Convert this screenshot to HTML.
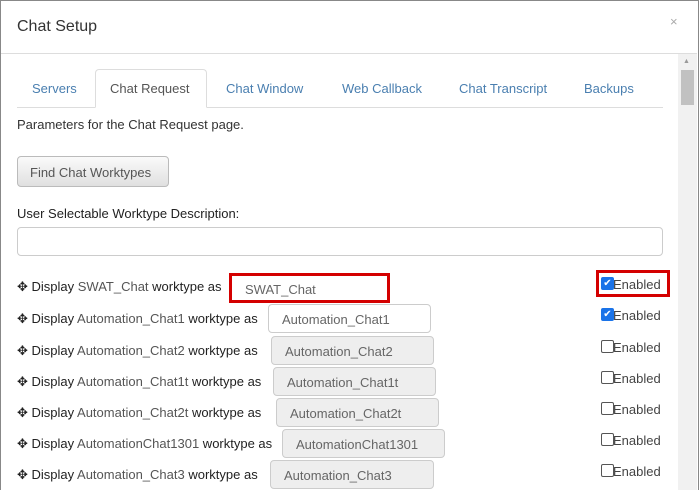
<!DOCTYPE html><html><head><style>
body{margin:0;width:699px;height:490px;overflow:hidden;background:#fff;font-family:"Liberation Sans",sans-serif;color:#333;position:relative}
.a{position:absolute;white-space:nowrap}
.tab{position:absolute;top:81px;font-size:13px;color:#4a7fb0}
.inp{position:absolute;height:29px;border:1px solid #ccc;border-radius:4px;box-sizing:border-box;font-size:13px;color:#666;padding:7px 0 0 13px}
.g{background:#eee}
.row{position:absolute;left:17px;font-size:13px;color:#222}
.row span{color:#555}
.cb{position:absolute;left:601px;width:11px;height:11px;border:1px solid #555;border-radius:2px;background:#fff}
.cb.on{background:#1a73e8;border-color:#1a73e8;color:#fff;font-size:10px;line-height:11px;text-align:center}
.en{position:absolute;left:613px;font-size:13px;color:#444}
</style></head><body>
<div class="a" style="left:0;top:0;width:697px;height:489px;border:1px solid #888;border-bottom:none"></div>
<div class="a" style="left:17px;top:18px;font-size:16px;color:#333">Chat Setup</div>
<div class="a" style="left:670px;top:14px;font-size:13px;color:#aaa">×</div>
<div class="a" style="left:1px;top:53px;width:696px;height:1px;background:#ddd"></div>
<div class="a" style="left:678px;top:54px;width:19px;height:436px;background:#f1f1f1"></div>
<div class="a" style="left:681px;top:70px;width:13px;height:35px;background:#c1c1c1"></div>
<div class="a" style="left:683px;top:58px;font-size:7px;color:#999">▲</div>
<div class="a" style="left:17px;top:107px;width:646px;height:1px;background:#ddd"></div>
<div class="a" style="left:95px;top:69px;width:112px;height:39px;border:1px solid #ddd;border-bottom:1px solid #fff;border-radius:4px 4px 0 0;box-sizing:border-box;background:#fff"></div>
<div class="tab" style="left:32px">Servers</div>
<div class="tab" style="left:110px;color:#555">Chat Request</div>
<div class="tab" style="left:226px">Chat Window</div>
<div class="tab" style="left:342px">Web Callback</div>
<div class="tab" style="left:459px">Chat Transcript</div>
<div class="tab" style="left:584px">Backups</div>
<div class="a" style="left:17px;top:117px;font-size:13px;color:#333">Parameters for the Chat Request page.</div>
<div class="a" style="left:17px;top:156px;width:152px;height:31px;border:1px solid #bbb;border-radius:4px;box-sizing:border-box;background:linear-gradient(#fafafa,#e0e0e0);font-size:13px;color:#555;padding:8px 0 0 12px">Find Chat Worktypes</div>
<div class="a" style="left:17px;top:206px;font-size:13px;color:#222">User Selectable Worktype Description:</div>
<div class="a" style="left:17px;top:227px;width:646px;height:29px;border:1px solid #ccc;border-radius:4px;box-sizing:border-box"></div>

<div class="row" style="top:279px">✥ Display <span>SWAT_Chat</span> worktype as</div>
<div class="inp" style="left:229px;top:273px;width:161px;height:30px;border:3px solid #d40000;border-radius:0;padding-top:6px">SWAT_Chat</div>
<div class="row" style="top:311px">✥ Display <span>Automation_Chat1</span> worktype as</div>
<div class="inp" style="left:268px;top:304px;width:163px">Automation_Chat1</div>
<div class="row" style="top:343px">✥ Display <span>Automation_Chat2</span> worktype as</div>
<div class="inp g" style="left:271px;top:336px;width:163px">Automation_Chat2</div>
<div class="row" style="top:374px">✥ Display <span>Automation_Chat1t</span> worktype as</div>
<div class="inp g" style="left:273px;top:367px;width:163px">Automation_Chat1t</div>
<div class="row" style="top:405px">✥ Display <span>Automation_Chat2t</span> worktype as</div>
<div class="inp g" style="left:276px;top:398px;width:163px">Automation_Chat2t</div>
<div class="row" style="top:436px">✥ Display <span>AutomationChat1301</span> worktype as</div>
<div class="inp g" style="left:282px;top:429px;width:163px">AutomationChat1301</div>
<div class="row" style="top:467px">✥ Display <span>Automation_Chat3</span> worktype as</div>
<div class="inp g" style="left:270px;top:460px;width:164px">Automation_Chat3</div>

<div class="a" style="left:596px;top:270px;width:74px;height:27px;border:3px solid #d40000;box-sizing:border-box"></div>
<div class="cb on" style="top:277px">✔</div><div class="en" style="top:277px">Enabled</div>
<div class="cb on" style="top:308px">✔</div><div class="en" style="top:308px">Enabled</div>
<div class="cb" style="top:340px"></div><div class="en" style="top:340px">Enabled</div>
<div class="cb" style="top:371px"></div><div class="en" style="top:371px">Enabled</div>
<div class="cb" style="top:402px"></div><div class="en" style="top:402px">Enabled</div>
<div class="cb" style="top:433px"></div><div class="en" style="top:433px">Enabled</div>
<div class="cb" style="top:464px"></div><div class="en" style="top:464px">Enabled</div>
</body></html>
